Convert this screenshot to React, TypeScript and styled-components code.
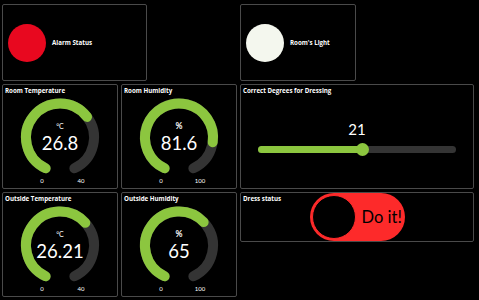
import styled, { createGlobalStyle } from 'styled-components';

const GREEN = "#8cc63f";
const TRACK = "#343434";

const GlobalStyle = createGlobalStyle`
    html, body {
        margin: 0;
        background: #000;
        color: #fff;
        font-family: "Open Sans", "Liberation Sans", sans-serif;
    }
`;

const Page = styled.div`
    display: grid;
    grid-template-columns: 235px 234px;
    grid-template-rows: 77px 105px 104px;
    column-gap: 3px;
    row-gap: 3px;
    padding: 4px 0 0 2px;
    width: 479px;
    height: 300px;
    box-sizing: border-box;
`;

const Card = styled.div<{ $width?: number }>`
    box-sizing: border-box;
    border: 1px solid #4a4a4a;
    border-radius: 2px;
    background: #000;
    width: ${p => p.$width ? `${p.$width}px` : "auto"};
    min-width: 0;
`;

const Title = styled.div`
    font-size: 6.2px;
    font-weight: 700;
    line-height: 10px;
    padding: 1px 2px 0;
    white-space: nowrap;
`;

const StatusCard = styled(Card)`
    display: flex;
    align-items: center;
    gap: 6px;
    padding: 0 5px;
`;

const Lamp = styled.div<{ $color: string }>`
    width: 38px;
    height: 38px;
    border-radius: 50%;
    background: ${p => p.$color};
    flex: none;
`;

const StatusLabel = styled.span`
    font-size: 6.2px;
    font-weight: 700;
`;

const Pair = styled.div`
    display: grid;
    grid-template-columns: 116px 116px;
    column-gap: 3px;
`;

const GaugeSvg = styled.svg`
    display: block;
    width: 114px;
    height: 92px;
`;

const SliderBody = styled.div`
    display: flex;
    flex-direction: column;
    align-items: center;
    padding-top: 24px;
`;

const SliderValue = styled.div`
    font-family: Lato, "Open Sans", sans-serif;
    font-size: 15px;
    line-height: 18px;
`;

const Track = styled.div`
    display: flex;
    align-items: center;
    width: 198px;
    height: 7px;
    margin-top: 8px;
    border-radius: 4px;
    background: ${TRACK};
`;

const Fill = styled.div`
    height: 100%;
    border-radius: 4px 0 0 4px;
    background: ${GREEN};
`;

const Thumb = styled.div`
    flex: none;
    width: 13px;
    height: 13px;
    margin-left: -6px;
    border-radius: 50%;
    background: ${GREEN};
`;

const DressCard = styled(Card)`
    display: grid;
    grid-template-columns: 1fr auto 1fr;
    align-self: start;
    height: 50px;
`;

const Toggle = styled.button`
    display: flex;
    align-items: center;
    gap: 6px;
    width: 95px;
    height: 48px;
    padding: 0 2px;
    border: 0;
    border-radius: 24px;
    background: #fd2a2a;
    cursor: pointer;
`;

const Knob = styled.span`
    width: 42px;
    height: 42px;
    border-radius: 50%;
    background: #000;
    border: 1px solid #fd2a2a;
`;

const ToggleText = styled.span`
    font-family: Lato, "Open Sans", sans-serif;
    font-size: 16.5px;
    color: #000;
`;

const HALF = 155;
const CX = 57;
const CY = 41.5;
const R = 34;

const point = (deg: number) => {
    const a = (deg * Math.PI) / 180;
    return `${(CX + R * Math.sin(a)).toFixed(2)} ${(CY - R * Math.cos(a)).toFixed(2)}`;
};

const arc = (from: number, to: number) =>
    `M ${point(from)} A ${R} ${R} 0 ${to - from > 180 ? 1 : 0} 1 ${point(to)}`;

interface IGaugeProps {
    title: string;
    unit: string;
    value: number;
    max: number;
}

const Gauge = ({ title, unit, value, max }: IGaugeProps) => {
    const end = -HALF + (value / max) * HALF * 2;
    const unitSize = unit === "%" ? 8.5 : 7;
    return (
        <Card>
            <Title>{title}</Title>
            <GaugeSvg viewBox="0 0 114 92">
                <path d={arc(-HALF, HALF)} stroke={TRACK} strokeWidth={10} fill="none" strokeLinecap="round" />
                <path d={arc(-HALF, end)} stroke={GREEN} strokeWidth={10} fill="none" strokeLinecap="round" />
                <text x={CX} y={CY - 12} fill="#fff" fontSize={unitSize} fontWeight={unit === "%" ? 700 : 400} textAnchor="middle" dominantBaseline="central" fontFamily="Lato, sans-serif">{unit}</text>
                <text x={CX} y={CY + 5.5} fill="#fff" fontSize={18.5} textAnchor="middle" dominantBaseline="central" fontFamily="Lato, sans-serif">{value}</text>
                <text x={CX - 18} y={84} fill="#fff" fontSize={6} textAnchor="middle" dominantBaseline="central" fontFamily="Lato, sans-serif">0</text>
                <text x={CX + 21} y={84} fill="#fff" fontSize={6} textAnchor="middle" dominantBaseline="central" fontFamily="Lato, sans-serif">{max}</text>
            </GaugeSvg>
        </Card>
    );
};

export default function App() {
    const degrees = 21;
    return (
        <>
            <GlobalStyle />
            <Page>
                <StatusCard $width={145}>
                    <Lamp $color="#e8081f" />
                    <StatusLabel>Alarm Status</StatusLabel>
                </StatusCard>
                <StatusCard $width={116}>
                    <Lamp $color="#f4f7ee" />
                    <StatusLabel>Room's Light</StatusLabel>
                </StatusCard>

                <Pair>
                    <Gauge title="Room Temperature" unit="°C" value={26.8} max={40} />
                    <Gauge title="Room Humidity" unit="%" value={81.6} max={100} />
                </Pair>
                <Card>
                    <Title>Correct Degrees for Dressing</Title>
                    <SliderBody>
                        <SliderValue>{degrees}</SliderValue>
                        <Track>
                            <Fill style={{ width: `${(degrees / 40) * 100}%` }} />
                            <Thumb />
                        </Track>
                    </SliderBody>
                </Card>

                <Pair>
                    <Gauge title="Outside Temperature" unit="°C" value={26.21} max={40} />
                    <Gauge title="Outside Humidity" unit="%" value={65} max={100} />
                </Pair>
                <DressCard>
                    <Title>Dress status</Title>
                    <Toggle>
                        <Knob />
                        <ToggleText>Do it!</ToggleText>
                    </Toggle>
                    <div />
                </DressCard>
            </Page>
        </>
    );
}
